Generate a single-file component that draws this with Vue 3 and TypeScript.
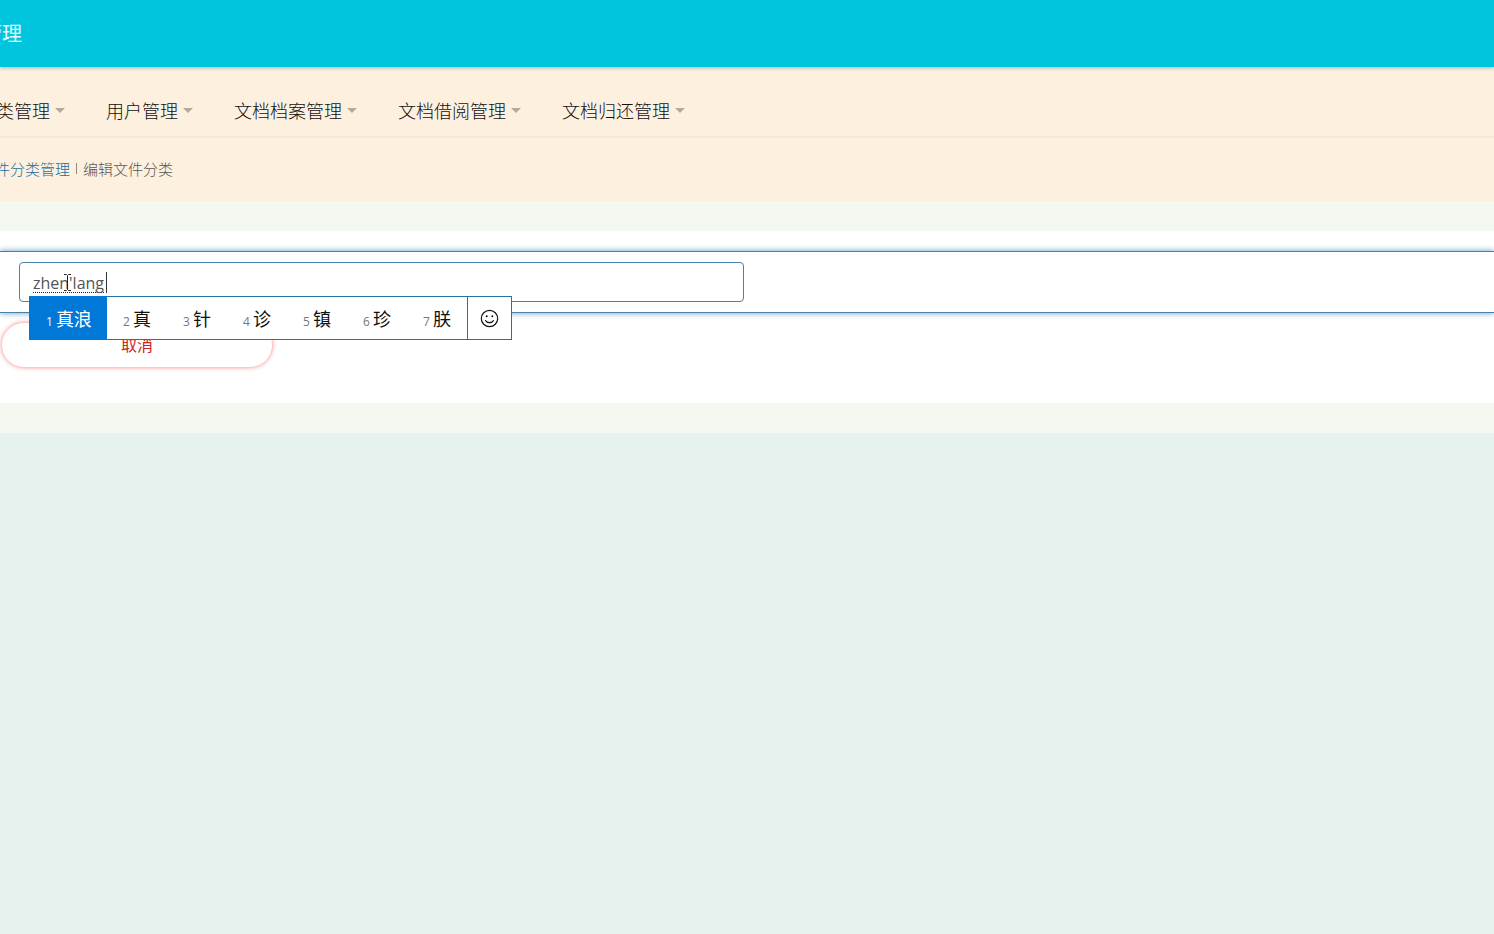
<script setup lang="ts">
import { ref } from 'vue'

interface MenuItem { label: string }
interface Candidate { index: number; text: string }

const menu: MenuItem[] = [
  { label: '类管理' },
  { label: '用户管理' },
  { label: '文档档案管理' },
  { label: '文档借阅管理' },
  { label: '文档归还管理' },
]
const candidates: Candidate[] = ['真浪', '真', '针', '诊', '镇', '珍', '朕'].map((text, i) => ({ index: i + 1, text }))
const category = ref("zhen'lang")
</script>

<template>
  <div class="page">
    <header class="topbar"><h1 class="title">管理</h1></header>
    <nav class="menu" aria-label="主菜单">
      <button v-for="item in menu" :key="item.label" type="button" class="menu-item">
        {{ item.label }}<span class="arrow"></span>
      </button>
    </nav>
    <div class="crumbs">
      <a href="#" class="crumb-link">件分类管理</a>
      <span class="divider"></span>
      <span>编辑文件分类</span>
    </div>
    <main class="content">
      <form class="panel" @submit.prevent>
        <div class="row">
          <div class="field">
            <input v-model="category" class="text-input" type="text" aria-label="文件分类" spellcheck="false" />
            <span class="caret"></span>
            <svg class="pointer" width="9" height="17" viewBox="0 0 9 17" fill="none" stroke="#222" stroke-width="1">
              <path d="M1 .5h2.5l1 1 1-1H8M4.500 1.500v14M1 16.500h2.500l1-1 1 1H8" />
            </svg>
            <div class="ime">
              <button
                v-for="c in candidates"
                :key="c.index"
                type="button"
                class="candidate"
                :class="{ active: c.index === 1 }"
              >
                <span class="num">{{ c.index }}</span><span>{{ c.text }}</span>
              </button>
              <button type="button" class="emoji" aria-label="表情">
                <svg width="19" height="19" viewBox="0 0 19 19" fill="none" stroke="#111" stroke-width="1.2">
                  <circle cx="9.500" cy="9.500" r="8.200" />
                  <path d="M5.300 11.300c1.600 3.200 6.800 3.200 8.400 0" />
                  <circle cx="6.700" cy="7.200" r="1" fill="#111" stroke="none" />
                  <circle cx="12.300" cy="7.200" r="1" fill="#111" stroke="none" />
                </svg>
              </button>
            </div>
          </div>
        </div>
        <button type="button" class="cancel">取消</button>
      </form>
    </main>
  </div>
</template>

<style>
body {
  background: #e5f2ed;
}
</style>

<style scoped>
.page {
  min-height: 100vh;
  overflow: hidden;
  background: #e5f2ed;
  font-family: "Open Sans", "Noto Sans CJK SC", sans-serif;
}
button {
  border: 0;
  padding: 0;
  background: none;
  font-family: inherit;
}
.topbar {
  position: relative;
  display: flex;
  align-items: center;
  height: 67px;
  background: #00c5df;
  box-shadow: 0 1px 4px rgba(0, 110, 160, 0.4);
}
.title {
  margin: 0 0 0 -18px;
  font-size: 20px;
  line-height: 28px;
  font-weight: 400;
  color: #e6fbff;
}
.menu {
  display: flex;
  align-items: center;
  gap: 41px;
  height: 71px;
  padding: 18px 0 0;
  box-sizing: border-box;
  margin-left: -4px;
  background: #fef0df;
  border-bottom: 2px solid #f3e7df;
}
.menu-item {
  display: flex;
  align-items: center;
  gap: 5px;
  font-size: 18px;
  line-height: 24px;
  font-weight: 300;
  color: #111;
  white-space: nowrap;
}
.arrow {
  border: 5px solid transparent;
  border-top-color: #b5a998;
  border-bottom: 0;
}
.crumbs {
  display: flex;
  align-items: center;
  gap: 6px;
  height: 63px;
  margin-left: -5px;
  padding-bottom: 2px;
  background: #fdf0df;
  box-sizing: border-box;
  font-size: 15px;
  line-height: 20px;
  font-weight: 300;
  color: #555;
}
.crumb-link {
  color: #1d6c9c;
  text-decoration: none;
}
.divider {
  width: 1px;
  height: 11px;
  background: #8d8982;
}
.content {
  padding: 30px 0;
  background: #f3f9f1;
}
.panel {
  padding: 20px 0 35px;
  background: #fff;
}
.row {
  padding: 10px 19px;
  border: solid #4a80a5;
  border-width: 1px 0;
  box-shadow: 0 0 6px #5c9bc8;
}
.field {
  position: relative;
  width: 50%;
  max-width: 725px;
}
.text-input {
  display: block;
  box-sizing: border-box;
  width: 100%;
  height: 40px;
  padding: 2px 13px 0;
  border: 1px solid #4683aa;
  border-radius: 4px;
  background: #fff;
  outline: none;
  font-family: "Open Sans", sans-serif;
  font-size: 16px;
  color: #555;
  text-decoration: underline dotted #222 1px;
  text-underline-offset: 3px;
  text-decoration-skip-ink: none;
}
.caret {
  position: absolute;
  left: 87px;
  top: 10px;
  width: 1px;
  height: 21px;
  background: #333;
}
.pointer {
  position: absolute;
  left: 44px;
  top: 12px;
}
.ime {
  position: absolute;
  z-index: 2;
  left: 10px;
  top: 34px;
  display: flex;
  height: 44px;
  box-sizing: border-box;
  border: 1px solid #2872a0;
  background: #fff;
}
.candidate {
  display: flex;
  align-items: baseline;
  gap: 3px;
  width: 60px;
  padding: 9px 0 0 16px;
  box-sizing: border-box;
  font-size: 18px;
  line-height: 26px;
  color: #111;
  white-space: nowrap;
}
.num {
  font-size: 12px;
  color: #777;
}
.candidate.active {
  width: 78px;
  margin: -1px 0 -1px -1px;
  padding: 10px 0 0 17px;
  background: #0078d7;
  color: #fff;
}
.active .num {
  color: #fff;
}
.emoji {
  display: flex;
  align-items: center;
  justify-content: center;
  width: 44px;
  border-left: 1px solid #2872a0;
}
.cancel {
  display: block;
  width: 272px;
  height: 46px;
  margin: 9px 0 0 1px;
  border: 1px solid #f9c9c9;
  border-radius: 23px;
  background: #fff;
  box-shadow: 0 0 4px #f6a9a9;
  font-size: 16px;
  line-height: 24px;
  font-weight: 400;
  color: #c22;
}
</style>
